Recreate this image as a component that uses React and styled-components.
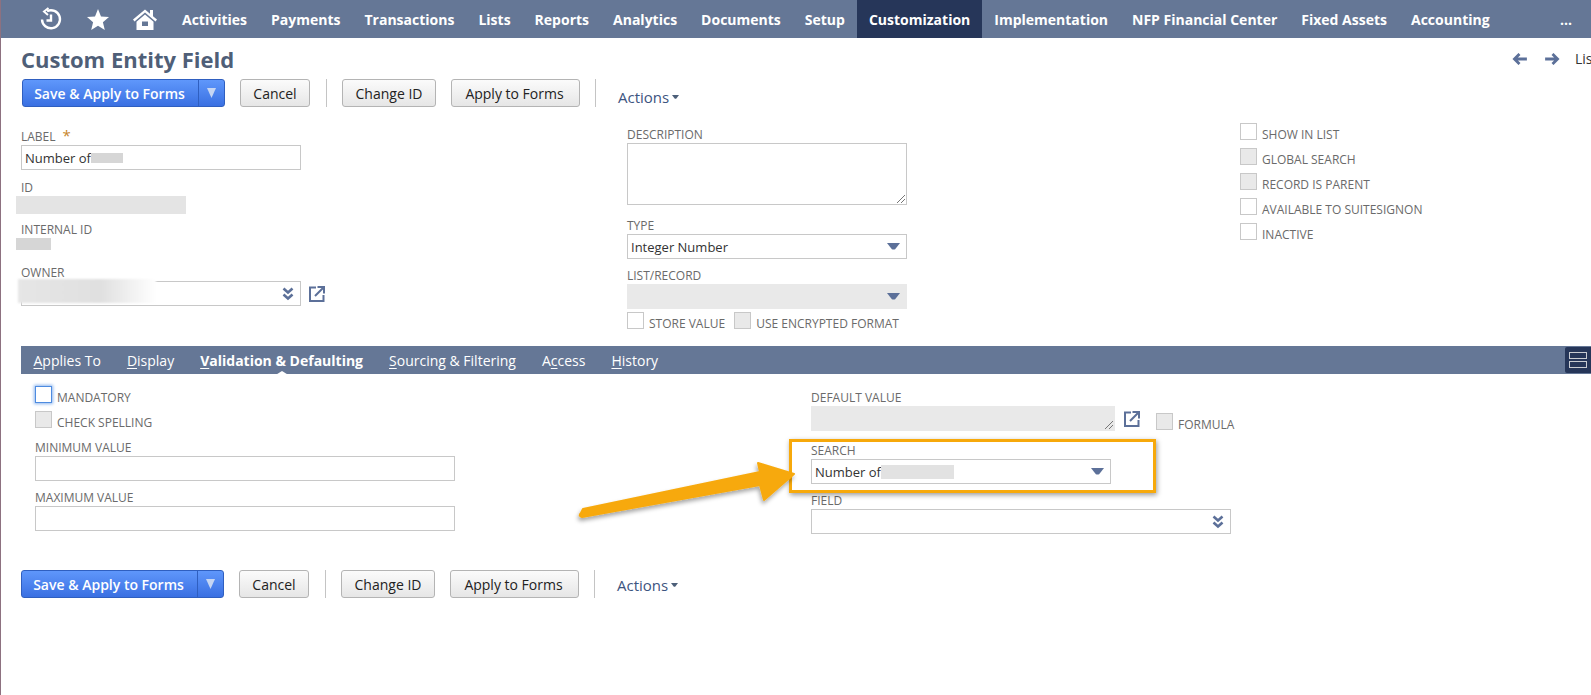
import React from 'react';
import styled, { createGlobalStyle } from 'styled-components';

const GlobalStyle = createGlobalStyle`
  html, body {
    margin: 0;
    padding: 0;
    background: #fff;
    font-family: "Open Sans", "Liberation Sans", sans-serif;
  }
`;

const Page = styled.div`
  position: relative;
  width: 1591px;
  height: 695px;
  box-sizing: border-box;
  border-left: 1px solid #8d7180;
  overflow: hidden;
`;

const NavBar = styled.nav`
  display: flex;
  align-items: stretch;
  height: 38px;
  background: #657796;
  padding-left: 37px;
`;

const NavIcon = styled.span`
  display: flex;
  align-items: center;
  justify-content: center;
  width: ${(p) => p.$w}px;
  margin-right: ${(p) => p.$mr || 0}px;
`;

const NavItem = styled.a`
  display: flex;
  align-items: center;
  padding: 0 12px;
  font-size: 14px;
  font-weight: 700;
  color: #fff;
  white-space: nowrap;
  background: ${(p) => (p.$active ? '#263659' : 'transparent')};
`;

const NavMore = styled(NavItem)`
  margin-left: auto;
  padding: 0 19px 0 0;
`;

const TitleRow = styled.div`
  display: flex;
  justify-content: space-between;
  align-items: center;
  height: 41px;
  padding-left: 20px;
`;

const Title = styled.h1`
  margin: 0;
  font-size: 22px;
  font-weight: 700;
  color: #4f5f78;
`;

const Pager = styled.div`
  display: flex;
  align-items: center;
  gap: 18px;
  font-size: 14px;
  color: #333;
`;

const ListLink = styled.span`
  width: 16px;
  margin-left: -3px;
`;

const Toolbar = styled.div`
  display: flex;
  align-items: center;
  height: 28px;
  margin-left: ${(p) => p.$left}px;
`;

const SplitButton = styled.div`
  display: flex;
  height: 28px;
  box-sizing: border-box;
  width: 203px;
  border: 1px solid #2f5fc0;
  border-radius: 3px;
  background: linear-gradient(180deg, #5f97fb, #3a70e2);
  color: #fff;
  font-size: 14px;
  font-weight: 600;
`;

const SplitLabel = styled.span`
  flex: 1;
  display: flex;
  align-items: center;
  justify-content: center;
  padding-right: 2px;
  white-space: nowrap;
`;

const SplitArrow = styled.span`
  display: flex;
  align-items: center;
  justify-content: center;
  width: 25px;
  border-left: 1px solid #2f5fc0;
`;

const Button = styled.button`
  height: 28px;
  box-sizing: border-box;
  width: ${(p) => p.$w}px;
  margin-left: ${(p) => p.$ml}px;
  padding: 0 ${(p) => p.$pr || 0}px 0 0;
  border: 1px solid #b4b4b4;
  border-radius: 3px;
  background: linear-gradient(180deg, #fbfbfb, #e6e6e6);
  font-family: inherit;
  font-size: 14px;
  color: #222;
`;

const Divider = styled.span`
  width: 1px;
  height: 28px;
  margin-left: ${(p) => p.$ml}px;
  background: #c4c4c4;
`;

const Actions = styled.span`
  display: flex;
  align-items: center;
  gap: 3px;
  margin-left: 22px;
  padding-top: ${(p) => p.$drop}px;
  font-size: 15px;
  color: #3d5480;
`;

const TopForm = styled.div`
  display: grid;
  grid-template-columns: 606px 613px 1fr;
  height: 239px;
  padding-left: 20px;
`;

const Column = styled.div`
  display: flex;
  flex-direction: column;
  padding-top: ${(p) => p.$top || 0}px;
`;

const Label = styled.label`
  display: block;
  height: ${(p) => p.$h || 16}px;
  margin-top: ${(p) => p.$mt || 0}px;
  font-size: 12px;
  line-height: 16px;
  color: #6a6a6a;
  white-space: nowrap;
`;

const Star = styled.span`
  margin-left: 7px;
  font-size: 15px;
  color: #c7862c;
`;

const Control = styled.div`
  position: relative;
  display: flex;
  align-items: center;
  justify-content: space-between;
  box-sizing: border-box;
  width: ${(p) => p.$w}px;
  height: ${(p) => p.$h || 25}px;
  padding: 0 6px 0 3px;
  border: 1px solid ${(p) => (p.$disabled ? '#e9e9e9' : '#c8c8c8')};
  background: ${(p) => (p.$disabled ? '#e9e9e9' : '#fff')};
  font-size: 13px;
  color: #333;
`;

const Grip = styled.svg`
  position: absolute;
  right: 1px;
  bottom: 1px;
`;

const Value = styled.span`
  display: flex;
  align-items: center;
`;

const Redacted = styled.span`
  display: block;
  width: ${(p) => p.$w}px;
  height: ${(p) => p.$h}px;
  margin-left: ${(p) => p.$ml || 0}px;
  background: ${(p) => p.$bg || '#d6d6d6'};
`;

const OwnerBlur = styled(Redacted)`
  position: absolute;
  left: -4px;
  top: -3px;
  filter: blur(1px);
`;

const WithIcon = styled.div`
  display: flex;
  align-items: center;
  gap: 7px;
`;

const CheckRow = styled.div`
  display: flex;
  align-items: flex-start;
  height: ${(p) => p.$h || 25}px;
  margin: ${(p) => p.$mt || 0}px 0 0 ${(p) => p.$ml || 0}px;
`;

const Box = styled.span`
  flex: none;
  box-sizing: border-box;
  width: 17px;
  height: 17px;
  margin-left: ${(p) => p.$ml || 0}px;
  border: 1px solid ${(p) => (p.$focus ? '#4d8be0' : '#c8c8c8')};
  background: ${(p) => (p.$disabled ? '#e9e9e9' : '#fff')};
  box-shadow: ${(p) => (p.$focus ? '0 0 3px 1px #8db6ee' : 'none')};
`;

const CheckText = styled.span`
  margin-left: 5px;
  padding-top: 4px;
  font-size: 12px;
  line-height: 16px;
  color: #6a6a6a;
  white-space: nowrap;
`;

const TabBar = styled.div`
  position: relative;
  display: flex;
  align-items: center;
  gap: 26px;
  height: 28px;
  margin-left: 20px;
  padding-left: 12.5px;
  background: #657796;
`;

const Tab = styled.a`
  position: relative;
  font-size: 14px;
  font-weight: ${(p) => (p.$active ? 700 : 400)};
  color: #fff;
  white-space: nowrap;
  u { text-underline-offset: 2px; }
  ${(p) => p.$active && `
    &::after {
      content: '';
      position: absolute;
      left: 50%;
      bottom: -6px;
      margin-left: -8px;
      border: 8px solid transparent;
      border-top: 0;
      border-bottom: 5px solid #fff;
    }
  `}
`;

const LayoutToggle = styled.span`
  position: absolute;
  right: 0;
  top: 1px;
  display: flex;
  flex-direction: column;
  align-items: center;
  justify-content: center;
  gap: 2px;
  width: 26px;
  height: 26px;
  background: #263659;
  border-radius: 2px 0 0 2px;
`;

const ToggleBar = styled.i`
  display: block;
  box-sizing: border-box;
  width: 18px;
  height: 7px;
  border: 1px solid #c9ccd2;
`;

const LowerForm = styled.div`
  display: grid;
  grid-template-columns: 776px 1fr;
  height: 196px;
  padding: 12px 0 0 34px;
  box-sizing: border-box;
`;

const DefaultRow = styled.div`
  display: flex;
  align-items: flex-start;
`;

const OpenIcon = styled.span`
  display: block;
  margin: 4px 0 0 8px;
  line-height: 0;
`;

const Arrow = styled.svg`
  position: absolute;
  left: 560px;
  top: 460px;
`;

const Highlight = styled.div`
  position: absolute;
  left: 788px;
  top: 439px;
  width: 367px;
  height: 54px;
  box-sizing: border-box;
  border: 3px solid #f7a90b;
  box-shadow: 1px 2px 5px rgba(0, 0, 0, 0.4);
`;

const CaretDown = ({ color = '#5c7099', w = 13, h = 7 }) => (
  <svg width={w} height={h} viewBox="0 0 12 7" preserveAspectRatio="none"><path d="M0 0h12L7.5 6.200Q6 7 4.500 6.200Z" fill={color} /></svg>
);

const SplitCaret = () => (
  <svg width="9" height="10" viewBox="0 0 9 10"><path d="M0 0h9L4.500 10Z" fill="#c6d6f3" /></svg>
);

const DoubleChevron = () => (
  <svg width="12" height="14" viewBox="0 0 12 14" fill="none" stroke="#5c7099" strokeWidth="2.600">
    <path d="M1.500 1.500 6 5.500l4.500-4" />
    <path d="M1.500 7.500 6 11.500l4.500-4" />
  </svg>
);

const ExternalIcon = () => (
  <svg width="18" height="18" viewBox="0 0 18 18" fill="none" stroke="#5c7099" strokeWidth="2">
    <path d="M8 2.500H2V16h13.500v-6" />
    <path d="M7 11l8-8M9.500 2h6.500v6.500" />
  </svg>
);

const ResizeGrip = () => (
  <Grip width="9" height="9" viewBox="0 0 9 9" stroke="#777" strokeWidth="1">
    <path d="M1 9l8-8M5 9l4-4" />
  </Grip>
);

const HistoryIcon = () => (
  <svg width="24" height="24" viewBox="0 0 24 24" fill="none" stroke="#fff" strokeWidth="2.400">
    <path d="M8 4.200A9 9 0 1 1 3 12.500" />
    <path d="M12 7.500v6H7.500" />
    <path d="M9.500 1 5 4.500l4 3.500" strokeWidth="2" />
  </svg>
);

const StarIcon = () => (
  <svg width="22" height="21" viewBox="0 0 22 21" fill="#fff">
    <path d="M11 0l3 7.400 8 .6-6.100 5.200L17.800 21 11 16.800 4.200 21l1.900-7.800L0 8l8-.6Z" />
  </svg>
);

const HomeIcon = () => (
  <svg width="24" height="24" viewBox="0 0 24 24" fill="#fff">
    <path d="M12 2.500 17 6.700V3h3v6.200l4 3.400-1.500 1.800L12 5.500 1.500 14.400 0 12.600Z" />
    <path fillRule="evenodd" d="M12 7.500l8.500 7.200V23h-17v-8.300Zm-3 7V19h6v-4.500Z" />
  </svg>
);

const ArrowLeft = () => (
  <svg width="15" height="12" viewBox="0 0 16 13" fill="none" stroke="#5c7099" strokeWidth="3">
    <path d="M16 6.500H3M8 1 2.500 6.500 8 12" />
  </svg>
);

const ArrowRight = () => (
  <svg width="15" height="12" viewBox="0 0 16 13" fill="none" stroke="#5c7099" strokeWidth="3">
    <path d="M0 6.500h13M8 1l5.500 5.500L8 12" />
  </svg>
);

const navItems = ['Activities', 'Payments', 'Transactions', 'Lists', 'Reports', 'Analytics', 'Documents', 'Setup', 'Customization', 'Implementation', 'NFP Financial Center', 'Fixed Assets', 'Accounting'];

const ButtonRow = ({ left, drop }) => (
  <Toolbar $left={left}>
    <SplitButton>
      <SplitLabel>Save &amp; Apply to Forms</SplitLabel>
      <SplitArrow><SplitCaret /></SplitArrow>
    </SplitButton>
    <Button $w={70} $ml={15}>Cancel</Button>
    <Divider $ml={16} />
    <Button $w={94} $ml={15}>Change ID</Button>
    <Button $w={129} $ml={15} $pr={2}>Apply to Forms</Button>
    <Divider $ml={15} />
    <Actions $drop={drop}>Actions <CaretDown color="#4d5f79" w={7} h={4} /></Actions>
  </Toolbar>
);

const Check = ({ label, disabled, focus, h }) => (
  <CheckRow $h={h}>
    <Box $disabled={disabled} $focus={focus} />
    <CheckText>{label}</CheckText>
  </CheckRow>
);

export default function App() {
  return (
    <>
      <GlobalStyle />
      <Page>
        <NavBar>
          <NavIcon $w={26}><HistoryIcon /></NavIcon>
          <NavIcon $w={67}><StarIcon /></NavIcon>
          <NavIcon $w={28} $mr={11}><HomeIcon /></NavIcon>
          {navItems.map((item) => (
            <NavItem key={item} $active={item === 'Customization'}>{item}</NavItem>
          ))}
          <NavMore>...</NavMore>
        </NavBar>

        <TitleRow>
          <Title>Custom Entity Field</Title>
          <Pager>
            <ArrowLeft />
            <ArrowRight />
            <ListLink>Lis</ListLink>
          </Pager>
        </TitleRow>
        <ButtonRow left={21} drop={8} />

        <TopForm>
          <Column>
            <Label $mt={20} $h={18}>LABEL<Star>*</Star></Label>
            <Control $w={280}><Value>Number of<Redacted $w={32} $h={10} /></Value></Control>
            <Label $mt={10}>ID</Label>
            <Redacted $w={170} $h={18} $ml={-5} $bg="#e4e4e4" />
            <Label $mt={8}>INTERNAL ID</Label>
            <Redacted $w={35} $h={12} $ml={-5} />
            <Label $mt={15}>OWNER</Label>
            <WithIcon>
              <Control $w={280}>
                <OwnerBlur $w={138} $h={24} $bg="linear-gradient(90deg, #e6e6e6, #e0e0e0 60%, #fff)" />
                <span />
                <DoubleChevron />
              </Control>
              <ExternalIcon />
            </WithIcon>
          </Column>

          <Column>
            <Label $mt={20}>DESCRIPTION</Label>
            <Control $w={280} $h={62}><ResizeGrip /></Control>
            <Label $mt={13}>TYPE</Label>
            <Control $w={280}>
              <span>Integer Number</span>
              <CaretDown />
            </Control>
            <Label $mt={9}>LIST/RECORD</Label>
            <Control $w={280} $disabled>
              <span />
              <CaretDown />
            </Control>
            <CheckRow $h={20} $mt={3}>
              <Box />
              <CheckText>STORE VALUE</CheckText>
              <Box $disabled $ml={9} />
              <CheckText>USE ENCRYPTED FORMAT</CheckText>
            </CheckRow>
          </Column>

          <Column $top={16}>
            <Check label="SHOW IN LIST" />
            <Check label="GLOBAL SEARCH" disabled />
            <Check label="RECORD IS PARENT" disabled />
            <Check label="AVAILABLE TO SUITESIGNON" />
            <Check label="INACTIVE" />
          </Column>
        </TopForm>

        <TabBar>
          <Tab><u>A</u>pplies To</Tab>
          <Tab><u>D</u>isplay</Tab>
          <Tab $active><u>V</u>alidation &amp; Defaulting</Tab>
          <Tab><u>S</u>ourcing &amp; Filtering</Tab>
          <Tab>A<u>c</u>cess</Tab>
          <Tab><u>H</u>istory</Tab>
          <LayoutToggle><ToggleBar /><ToggleBar /></LayoutToggle>
        </TabBar>

        <LowerForm>
          <Column>
            <Check label="MANDATORY" focus />
            <Check label="CHECK SPELLING" disabled h={29} />
            <Label>MINIMUM VALUE</Label>
            <Control $w={420} />
            <Label $mt={9}>MAXIMUM VALUE</Label>
            <Control $w={420} />
          </Column>

          <Column>
            <Label $mt={4}>DEFAULT VALUE</Label>
            <DefaultRow>
              <Control $w={304} $disabled><ResizeGrip /></Control>
              <OpenIcon><ExternalIcon /></OpenIcon>
              <CheckRow $ml={15} $mt={7} $h={18}>
                <Box $disabled />
                <CheckText>FORMULA</CheckText>
              </CheckRow>
            </DefaultRow>
            <Label $mt={12}>SEARCH</Label>
            <Control $w={300}>
              <Value>Number of<Redacted $w={73} $h={14} $bg="#e2e2e2" /></Value>
              <CaretDown />
            </Control>
            <Label $mt={9}>FIELD</Label>
            <Control $w={420}>
              <span />
              <DoubleChevron />
            </Control>
          </Column>
        </LowerForm>

        <ButtonRow left={20} drop={2} />

        <Highlight />
        <Arrow width="240" height="70" viewBox="0 0 240 70">
          <defs>
            <filter id="arrowShadow" x="-10%" y="-30%" width="120%" height="170%">
              <feDropShadow dx="-1" dy="3" stdDeviation="2" floodColor="#000" floodOpacity="0.35" />
            </filter>
          </defs>
          <path
            d="M20 53Q17 56 21 57L199 25 203 40 233 14 197 3 199 12 22 49Z"
            fill="#f7a90b"
            stroke="#f7a90b"
            strokeWidth="2"
            strokeLinejoin="round"
            filter="url(#arrowShadow)"
          />
        </Arrow>
      </Page>
    </>
  );
}
